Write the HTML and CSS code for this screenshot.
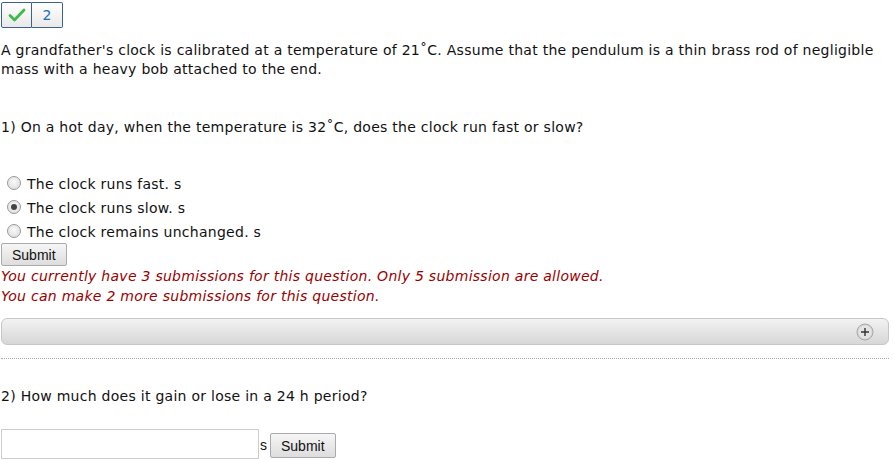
FILE: index.html
```html
<!DOCTYPE html>
<html>
<head>
<meta charset="utf-8">
<link rel="stylesheet" href="styles.css">
</head>
<body>
<div class="page">
  <div class="btn-group">
    <span class="gbtn"><svg width="18" height="16" viewBox="0 0 18 16"><path d="M2 8.5 L6.5 13 L16 3" fill="none" stroke="#3dbb4a" stroke-width="2.8" stroke-linecap="round" stroke-linejoin="round"/></svg></span>
    <span class="gbtn num">2</span>
  </div>
  <p class="intro">A grandfather's clock is calibrated at a temperature of 21˚C. Assume that the pendulum is a thin brass rod of negligible mass with a heavy bob attached to the end.</p>
  <p class="q q1">1) On a hot day, when the temperature is 32˚C, does the clock run fast or slow?</p>
  <div class="options">
    <label class="opt"><input type="radio" name="a"> The clock runs fast. s</label>
    <label class="opt"><input type="radio" name="a" checked> The clock runs slow. s</label>
    <label class="opt"><input type="radio" name="a"> The clock remains unchanged. s</label>
  </div>
  <button class="submit">Submit</button>
  <div class="msg">You currently have 3 submissions for this question. Only 5 submission are allowed.<br>You can make 2 more submissions for this question.</div>
  <div class="bar"><span class="plus"><svg width="18" height="18" viewBox="0 0 18 18"><circle cx="9" cy="9" r="8" fill="#d6d6d6" stroke="#a8a8a8" stroke-width="1"/><circle cx="9" cy="9" r="6.5" fill="#e4e4e4"/><path d="M9 5 V13 M5 9 H13" stroke="#333" stroke-width="1.4"/></svg></span></div>
  <hr class="sep">
  <p class="q q2">2) How much does it gain or lose in a 24 h period?</p>
  <div class="answer"><input type="text" class="field"><span class="unit">s</span><button class="submit">Submit</button></div>
</div>
</body>
</html>
```
FILE: styles.css
```css
html, body { margin: 0; padding: 0; background: #fff; }
body { font-family: "DejaVu Sans", Verdana, sans-serif; font-size: 14px; letter-spacing: 0.27px; color: #111; }
.page { padding: 2px 1px 0 1px; width: 888px; }
.btn-group { display: flex; }
.gbtn { display: flex; align-items: center; justify-content: center; height: 24px; width: 29px; border: 1px solid #3b6388; border-radius: 2px; background: linear-gradient(#ffffff, #e9e9e9); color: #1a6fb5; font-size: 14px; letter-spacing: 0; }
.gbtn + .gbtn { border-left: none; border-top-left-radius: 0; border-bottom-left-radius: 0; }
.gbtn:first-child { border-top-right-radius: 0; border-bottom-right-radius: 0; }
.num { width: 30px; }
.intro { margin: 13px 0 0 0; line-height: 19px; }
.q1 { margin: 39px 0 0 0; line-height: 19px; }
.options { margin-top: 35px; display: flex; flex-direction: column; }
.opt { display: flex; align-items: center; height: 24px; }
.opt input { appearance: none; -webkit-appearance: none; margin: 0 6px 2px 6px; width: 14px; height: 14px; border-radius: 50%; border: 1px solid #9a9a9a; background: radial-gradient(circle at 50% 40%, #fafafa, #d8d8d8); box-sizing: border-box; display: flex; align-items: center; justify-content: center; }
.opt input:checked::after { content: ""; width: 6px; height: 6px; border-radius: 50%; background: #444; }
.submit { font-family: "Liberation Sans", Arial, sans-serif; font-size: 14px; letter-spacing: 0; padding: 1px 10px; height: 23px; border: 1px solid #aaa; border-radius: 2px; background: linear-gradient(#f6f6f6, #dddddd); color: #111; }
.options + .submit { margin-top: -1px; display: block; }
.msg { color: #990000; font-style: italic; line-height: 20px; margin-top: 0; }
.bar { margin-top: 12px; height: 25px; border: 1px solid #c6c6c6; border-radius: 6px; background: linear-gradient(#f2f2f2, #d7d7d7); display: flex; justify-content: flex-end; align-items: center; padding-right: 14px; }
.plus { display: flex; }
.sep { margin: 13px 0 0 0; border: none; border-top: 1px dotted #aaa; height: 0; }
.q2 { margin: 28px 0 0 0; line-height: 19px; }
.answer { margin-top: 23px; display: flex; align-items: center; }
.field { width: 258px; height: 30px; box-sizing: border-box; border: 1px solid #ccc; padding: 1px 2px; margin: 0; }
.unit { font-family: "Liberation Sans", Arial, sans-serif; font-size: 14px; letter-spacing: 0; margin: 2px 3px 0 1px; }
.answer .submit { margin-top: 3px; height: 25px; }
```
